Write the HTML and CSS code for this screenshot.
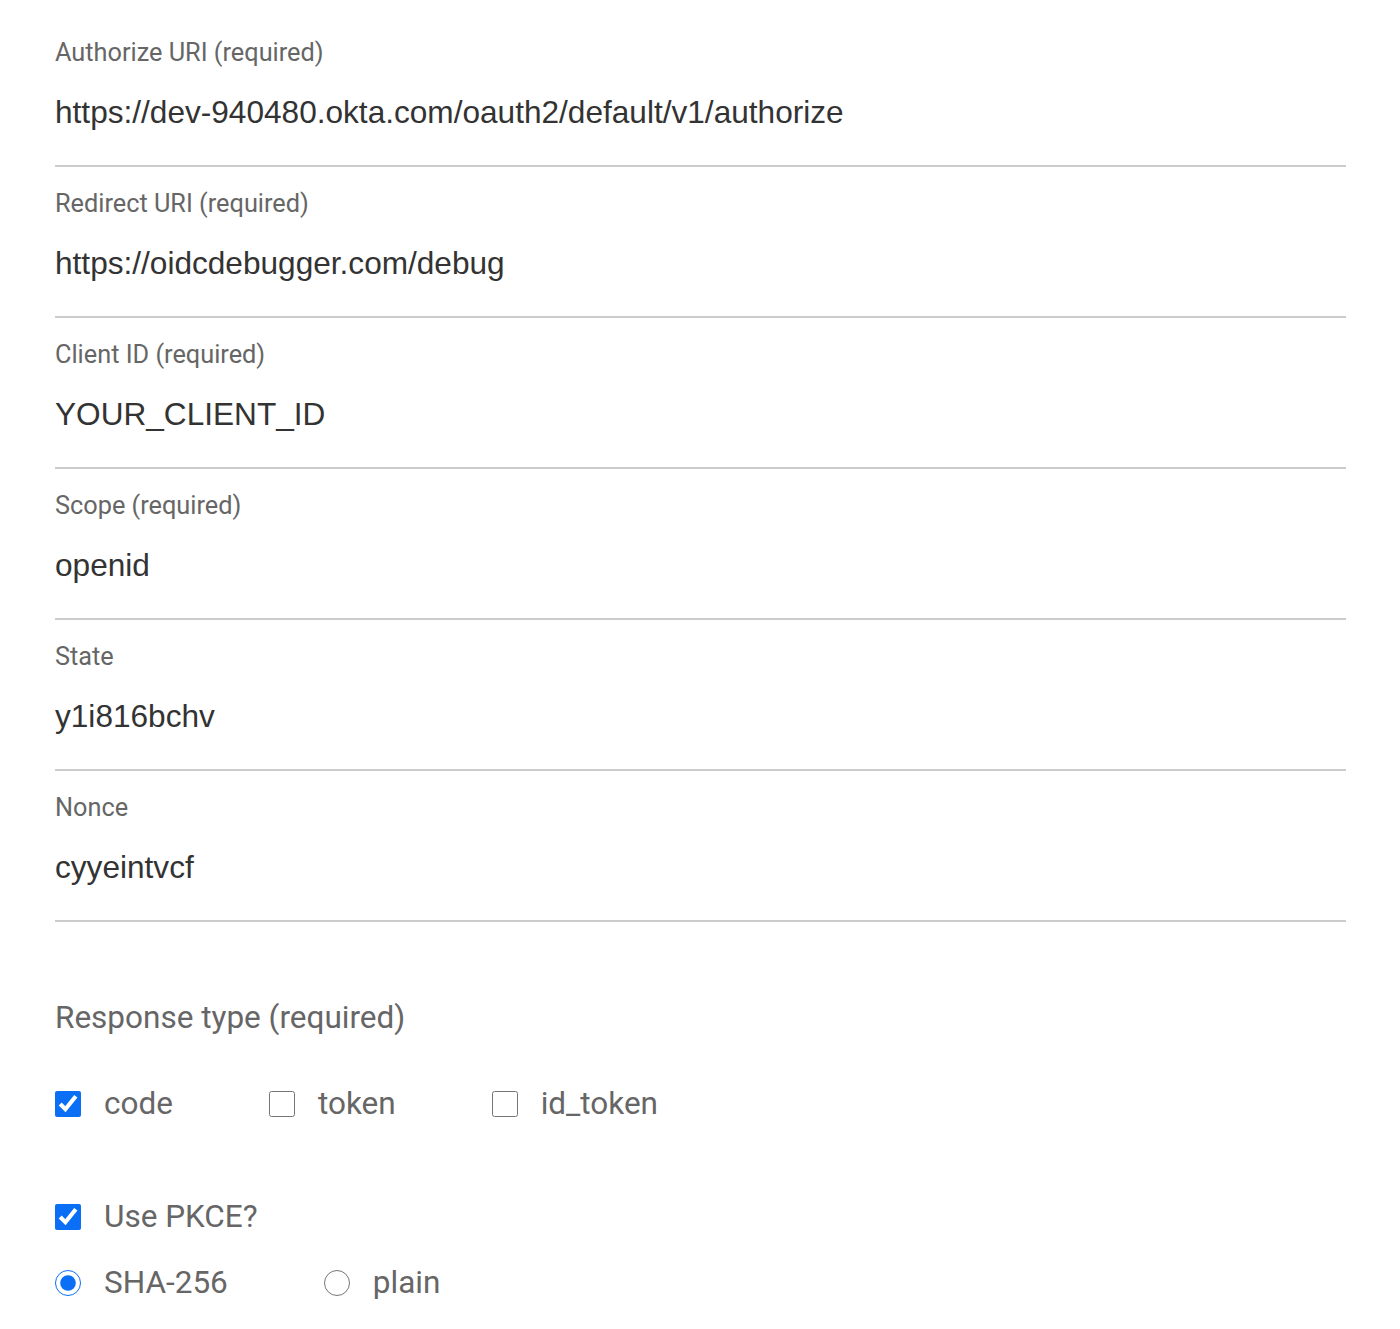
FILE: index.html
```html
<!DOCTYPE html>
<html lang="en">
<head>
<meta charset="utf-8">
<title>OIDC Debugger</title>
<link rel="stylesheet" href="styles.css">
</head>
<body>
<form class="form">
  <div class="field">
    <label class="field-label">Authorize URI (required)</label>
    <div class="field-value">https://dev-940480.okta.com/oauth2/default/v1/authorize</div>
  </div>
  <div class="field">
    <label class="field-label">Redirect URI (required)</label>
    <div class="field-value">https://oidcdebugger.com/debug</div>
  </div>
  <div class="field">
    <label class="field-label">Client ID (required)</label>
    <div class="field-value">YOUR_CLIENT_ID</div>
  </div>
  <div class="field">
    <label class="field-label">Scope (required)</label>
    <div class="field-value">openid</div>
  </div>
  <div class="field">
    <label class="field-label">State</label>
    <div class="field-value">y1i816bchv</div>
  </div>
  <div class="field">
    <label class="field-label">Nonce</label>
    <div class="field-value">cyyeintvcf</div>
  </div>

  <div class="section">
    <div class="section-title">Response type (required)</div>
    <div class="options options-response">
      <label class="option"><input type="checkbox" checked><span>code</span></label>
      <label class="option"><input type="checkbox"><span>token</span></label>
      <label class="option"><input type="checkbox"><span>id_token</span></label>
    </div>
    <div class="options options-pkce">
      <label class="option"><input type="checkbox" checked><span>Use PKCE?</span></label>
    </div>
    <div class="options options-method">
      <label class="option"><input type="radio" name="method" checked><span>SHA-256</span></label>
      <label class="option"><input type="radio" name="method"><span>plain</span></label>
    </div>
  </div>
</form>
</body>
</html>
```
FILE: styles.css
```css
html, body {
  margin: 0;
  padding: 0;
  background: #ffffff;
}

.form {
  padding: 16px 54px 0 55px;
}

.field {
  padding-top: 23px;
  padding-bottom: 33px;
  border-bottom: 2px solid #cccccc;
}

.field-label {
  display: block;
  font-family: Roboto, "Noto Sans", sans-serif;
  font-size: 25.3px;
  line-height: 28px;
  color: #666666;
}

.field-value {
  margin-top: 25px;
  font-family: "Liberation Sans", Arial, sans-serif;
  font-size: 31.6px;
  line-height: 40px;
  color: #333333;
  white-space: nowrap;
}

.section {
  margin-top: 77px;
}

.section-title {
  font-family: Roboto, "Noto Sans", sans-serif;
  font-size: 31.5px;
  line-height: 38px;
  color: #666666;
}

.options {
  display: flex;
  gap: 96px;
  font-family: Roboto, "Noto Sans", sans-serif;
  font-size: 31.5px;
  line-height: 38px;
  color: #666666;
}

.options-response {
  margin-top: 48px;
}

.options-pkce {
  margin-top: 75px;
}

.options-method {
  margin-top: 28px;
}

.option {
  display: flex;
  align-items: center;
  gap: 23px;
}

.option input {
  margin: 0;
  width: 26px;
  height: 26px;
  accent-color: #0b6ff5;
}
```
